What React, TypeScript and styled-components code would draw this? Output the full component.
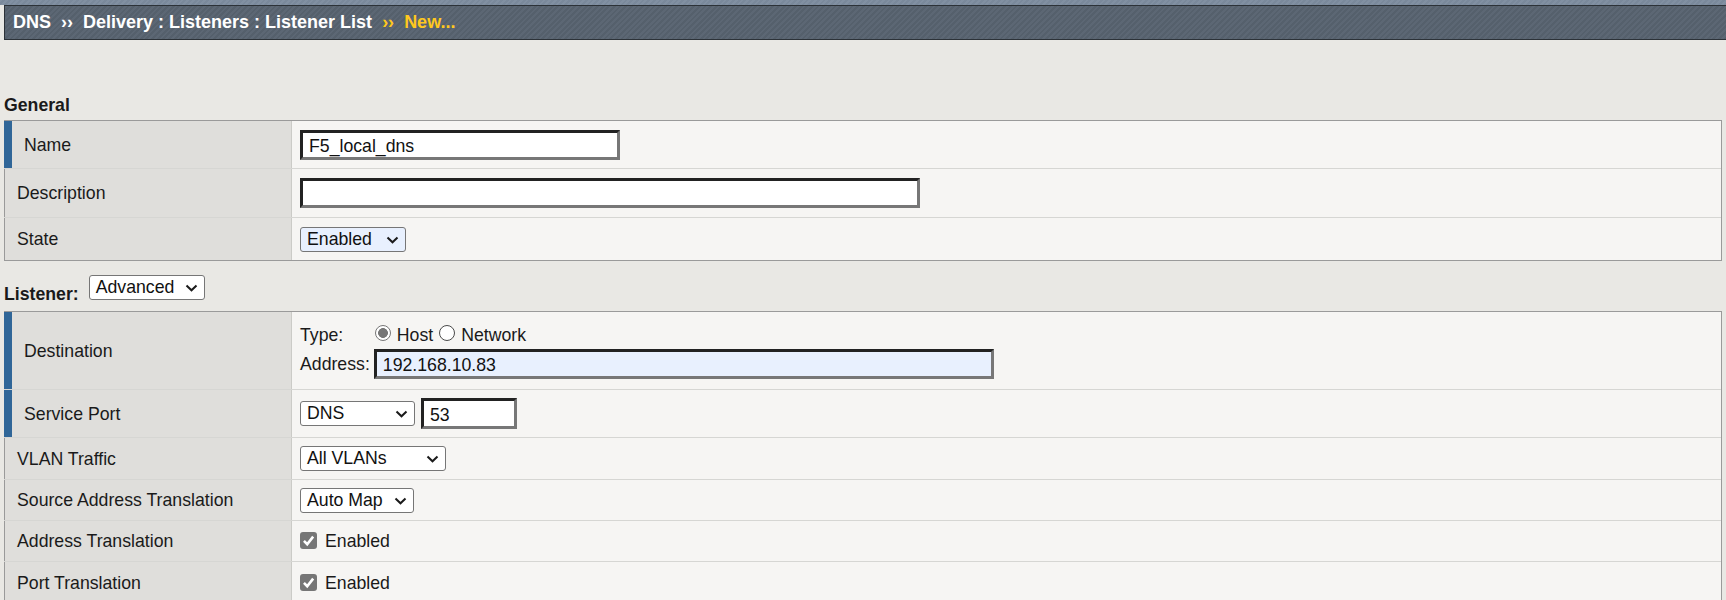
import React from "react";
import styled, { createGlobalStyle } from "styled-components";

const GlobalStyle = createGlobalStyle`
  html, body {
    margin: 0;
    padding: 0;
  }
  body {
    background: #e9e8e4;
    font-family: "Liberation Sans", Arial, sans-serif;
    font-size: 17.7px;
    line-height: 20px;
    color: #1a1a1a;
  }
  * {
    box-sizing: border-box;
  }
`;

const TopStripe = styled.div`
  height: 5px;
  background: repeating-linear-gradient(-45deg, #7a899b 0 2px, #8190a2 2px 4px);
`;

const TitleBar = styled.div`
  height: 35px;
  margin-left: 4px;
  border: 1px solid #2c3238;
  border-right: none;
  background: repeating-linear-gradient(-45deg, #55606c 0 2px, #5c6774 2px 4px);
  display: flex;
  align-items: center;
  padding: 0 0 2px 8px;
  font-size: 18px;
  font-weight: bold;
  color: #ffffff;
  white-space: pre;
`;

const Crumb = styled.span<{ $current?: boolean }>`
  color: ${(p) => (p.$current ? "#ffc81e" : "#ffffff")};
`;

const Sep = styled.span<{ $current?: boolean }>`
  margin: 0 10px;
  color: ${(p) => (p.$current ? "#ffc81e" : "#ffffff")};
`;

const Content = styled.main`
  padding: 0 4px;
`;

const SectionTitle = styled.div`
  font-weight: bold;
  margin: 55px 0 5px;
`;

const ListenerBar = styled.div`
  display: flex;
  align-items: flex-end;
  gap: 10px;
  margin: 14px 0 11px;
`;

const BarLabel = styled.span`
  font-weight: bold;
  margin-bottom: -4px;
`;

const Table = styled.div`
  border: 1px solid #9a9a9a;
  border-left: none;
`;

const Row = styled.div<{ $h: number }>`
  display: grid;
  grid-template-columns: 288px 1fr;
  height: ${(p) => p.$h + 1}px;
  border-bottom: 1px solid #d6d6d3;
  &:last-child {
    height: ${(p) => p.$h}px;
    border-bottom: none;
  }
`;

const LabelCell = styled.div<{ $required?: boolean }>`
  display: flex;
  align-items: center;
  padding-left: 12px;
  background: #dfdedb;
  border-left: ${(p) => (p.$required ? "8px solid #306698" : "1px solid #9a9a9a")};
  border-right: 1px solid #cbcbc7;
`;

const ValueCell = styled.div`
  display: flex;
  align-items: center;
  gap: 6px;
  padding-left: 8px;
  background: #f6f5f3;
`;

const TextInput = styled.input<{ $w: number; $h?: number; $fill?: string }>`
  width: ${(p) => p.$w}px;
  height: ${(p) => p.$h ?? 30}px;
  padding: 3px 6px 0;
  border-style: solid;
  border-width: 3px;
  border-color: #222222 #777777 #777777 #222222;
  background: ${(p) => p.$fill ?? "#ffffff"};
  font: inherit;
  color: #111;
  outline: none;
`;

const SelectBox = styled.div<{ $w: number; $fill?: string }>`
  display: inline-flex;
  align-items: center;
  justify-content: space-between;
  width: ${(p) => p.$w}px;
  height: 25px;
  padding: 1px 6px 0 6px;
  border: 1px solid #767676;
  border-radius: 3px;
  background: ${(p) => p.$fill ?? "#ffffff"};
  color: #111;
  line-height: 1;
`;

const DestGrid = styled.div`
  display: grid;
  grid-template-columns: auto auto;
  justify-content: start;
  align-items: center;
  column-gap: 4px;
  row-gap: 4px;
  padding-top: 3px;
`;

const Options = styled.div`
  display: flex;
  align-items: baseline;
  margin-left: 1px;
`;

const Option = styled.label`
  display: inline-flex;
  align-items: baseline;
  gap: 6px;
  margin-right: 6px;
`;

const RadioDot = styled.span<{ $checked?: boolean }>`
  width: 16px;
  height: 16px;
  border-radius: 50%;
  border: ${(p) => (p.$checked ? "1.5px solid #767676" : "1px solid #4a4a4a")};
  background: ${(p) =>
    p.$checked
      ? "radial-gradient(circle, #767676 0 4.6px, #ffffff 5.2px)"
      : "#ffffff"};
`;

const CheckLine = styled.label`
  display: flex;
  align-items: baseline;
  gap: 8px;
`;

const CheckBox = styled.span`
  display: inline-flex;
  align-items: center;
  justify-content: center;
  width: 17px;
  height: 17px;
  border-radius: 3px;
  background: #767676;
`;

const Chevron = () => (
  <svg width="13" height="8" viewBox="0 0 13 8">
    <polyline points="1.5,1.5 6.5,6.3 11.5,1.5" fill="none" stroke="#1a1a1a" strokeWidth="2" />
  </svg>
);

const Select = ({ value, w, fill }: { value: string; w: number; fill?: string }) => (
  <SelectBox $w={w} $fill={fill}>
    <span>{value}</span>
    <Chevron />
  </SelectBox>
);

const Radio = ({ label, checked }: { label: string; checked?: boolean }) => (
  <Option>
    <RadioDot $checked={checked} />
    <span>{label}</span>
  </Option>
);

const Checked = ({ label }: { label: string }) => (
  <CheckLine>
    <CheckBox>
      <svg width="13" height="13" viewBox="0 0 12 12">
        <polyline points="1.8,6.4 4.8,9.4 10.3,2.4" fill="none" stroke="#ffffff" strokeWidth="2.4" />
      </svg>
    </CheckBox>
    <span>{label}</span>
  </CheckLine>
);

export default function App() {
  return (
    <>
      <GlobalStyle />
      <TopStripe />
      <TitleBar>
        <Crumb>DNS</Crumb>
        <Sep>››</Sep>
        <Crumb>Delivery : Listeners : Listener List</Crumb>
        <Sep $current>››</Sep>
        <Crumb $current>New...</Crumb>
      </TitleBar>
      <Content>
        <SectionTitle>General</SectionTitle>
        <Table>
          <Row $h={47}>
            <LabelCell $required>Name</LabelCell>
            <ValueCell>
              <TextInput $w={320} $h={30} defaultValue="F5_local_dns" />
            </ValueCell>
          </Row>
          <Row $h={48}>
            <LabelCell>Description</LabelCell>
            <ValueCell>
              <TextInput $w={620} $h={30} defaultValue="" />
            </ValueCell>
          </Row>
          <Row $h={42}>
            <LabelCell>State</LabelCell>
            <ValueCell>
              <Select value="Enabled" w={106} fill="#e8f0fe" />
            </ValueCell>
          </Row>
        </Table>

        <ListenerBar>
          <BarLabel>Listener:</BarLabel>
          <Select value="Advanced" w={116} />
        </ListenerBar>
        <Table>
          <Row $h={77}>
            <LabelCell $required>Destination</LabelCell>
            <ValueCell>
              <DestGrid>
                <span>Type:</span>
                <Options>
                  <Radio label="Host" checked />
                  <Radio label="Network" />
                </Options>
                <span>Address:</span>
                <TextInput $w={620} $h={30} $fill="#e8f0fe" defaultValue="192.168.10.83" />
              </DestGrid>
            </ValueCell>
          </Row>
          <Row $h={47}>
            <LabelCell $required>Service Port</LabelCell>
            <ValueCell>
              <Select value="DNS" w={115} />
              <TextInput $w={96} $h={31} defaultValue="53" />
            </ValueCell>
          </Row>
          <Row $h={41}>
            <LabelCell>VLAN Traffic</LabelCell>
            <ValueCell>
              <Select value="All VLANs" w={146} />
            </ValueCell>
          </Row>
          <Row $h={40}>
            <LabelCell>Source Address Translation</LabelCell>
            <ValueCell>
              <Select value="Auto Map" w={114} />
            </ValueCell>
          </Row>
          <Row $h={40}>
            <LabelCell>Address Translation</LabelCell>
            <ValueCell>
              <Checked label="Enabled" />
            </ValueCell>
          </Row>
          <Row $h={41}>
            <LabelCell>Port Translation</LabelCell>
            <ValueCell>
              <Checked label="Enabled" />
            </ValueCell>
          </Row>
        </Table>
      </Content>
    </>
  );
}
